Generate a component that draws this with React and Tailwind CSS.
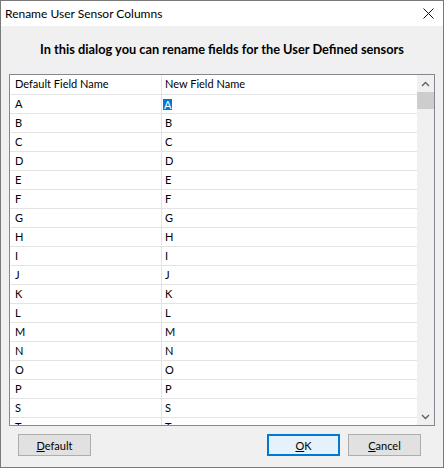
const rows = ['A', 'B', 'C', 'D', 'E', 'F', 'G', 'H', 'I', 'J', 'K', 'L', 'M', 'N', 'O', 'P', 'S', 'T', 'U'];

function Chevron({ up }) {
  return (
    <svg width="9" height="6" viewBox="0 0 9 6" className="block">
      <path
        d={up ? 'M1 5 L4.5 1.5 L8 5' : 'M1 1 L4.5 4.5 L8 1'}
        fill="none"
        stroke="#606060"
        strokeWidth="1.4"
      />
    </svg>
  );
}

function Button({ children, focused }) {
  return (
    <button
      className={
        focused
          ? 'w-[73px] h-[22px] bg-[#e5f1fb] border-2 border-[#0078d7] text-[11px] leading-none text-black'
          : 'w-[73px] h-[22px] bg-[#e1e1e1] border border-[#adadad] text-[11px] leading-none text-black'
      }
    >
      {children}
    </button>
  );
}

export default function App() {
  return (
    <div
      className="w-[444px] h-[468px] bg-[#f0f0f0] border border-[#7a7a7a] flex flex-col text-black"
      style={{ fontFamily: 'Lato, "Noto Sans", sans-serif' }}
    >
      {/* title bar */}
      <div className="h-[25px] bg-white flex items-center justify-between pl-[4px] pr-[9px]">
        <span className="text-[12px]">Rename User Sensor Columns</span>
        <svg width="11" height="11" viewBox="0 0 11 11">
          <path d="M0.5 0.5 L10.5 10.5 M10.5 0.5 L0.5 10.5" stroke="#111" strokeWidth="1" />
        </svg>
      </div>

      <div className="h-[48px] flex items-center justify-center">
        <span className="text-[12.8px] font-bold">In this dialog you can rename fields for the User Defined sensors</span>
      </div>

      {/* grid */}
      <div className="mx-[8px] h-[352px] border border-[#828790] bg-white flex overflow-hidden">
        <div className="flex-1 flex flex-col overflow-hidden text-[11px]">
          <div className="h-[20px] shrink-0 flex border-b border-[#e3e3e3]">
            <div className="w-[152px] border-r border-[#e3e3e3] pl-[5px] flex items-center">Default Field Name</div>
            <div className="flex-1 pl-[3px] flex items-center">New Field Name</div>
          </div>
          {rows.map((r, i) => (
            <div key={r} className="h-[19px] shrink-0 flex border-b border-[#e3e3e3]">
              <div className="w-[152px] border-r border-[#e3e3e3] pl-[5px] flex items-center">{r}</div>
              <div className="flex-1 flex items-center">
                {i === 0 ? (
                  <span className="bg-[#0078d7] text-white leading-[11px] px-[1px] ml-[1px]">{r}</span>
                ) : (
                  <span className="pl-[3px]">{r}</span>
                )}
              </div>
            </div>
          ))}
        </div>
        {/* scrollbar */}
        <div className="w-[17px] bg-[#f0f0f0] flex flex-col items-center">
          <div className="h-[17px] flex items-center justify-center">
            <Chevron up />
          </div>
          <div className="w-[17px] h-[17px] bg-[#cdcdcd]" />
          <div className="flex-1" />
          <div className="h-[17px] flex items-center justify-center">
            <Chevron />
          </div>
        </div>
      </div>

      <div className="flex items-center mt-[8px] pl-[17px] pr-[22px]">
        <Button>
          <span className="underline">D</span>efault
        </Button>
        <div className="flex-1" />
        <Button focused>
          <span className="underline">O</span>K
        </Button>
        <div className="w-[8px]" />
        <Button>
          <span className="underline">C</span>ancel
        </Button>
      </div>
    </div>
  );
}
